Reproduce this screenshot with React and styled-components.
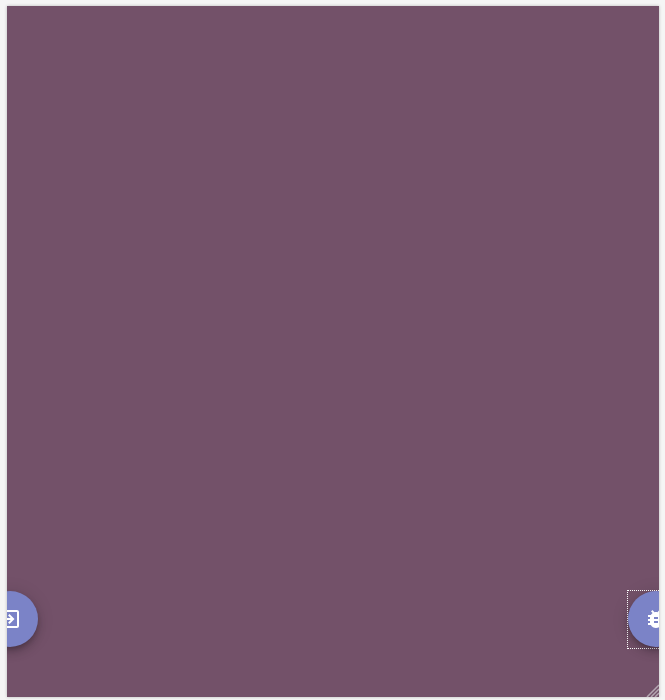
import React from 'react';
import styled, { createGlobalStyle } from 'styled-components';

const GlobalStyle = createGlobalStyle`
html, body {
    margin: 0;
    padding: 0;
    height: 100%;
    background: #f5f5f5;
    overflow: hidden;
}
`;

const Page = styled.div`
width: 665px;
height: 700px;
box-sizing: border-box;
padding: 6px 6px 3px 7px;
display: flex;
`;

const Canvas = styled.div`
position: relative;
flex: 1;
overflow: hidden;
background: #735169;
box-shadow: 0 0 3px rgba(0, 0, 0, 0.25);
`;

const Fab = styled.button`
position: absolute;
top: 585px;
left: ${props => props.left}px;
width: 56px;
height: 56px;
padding: 0;
border: none;
border-radius: 50%;
background: #7b83c7;
color: #fff;
display: flex;
align-items: center;
justify-content: center;
box-shadow: 0 3px 5px -1px rgba(0, 0, 0, 0.2), 0 6px 10px 0 rgba(0, 0, 0, 0.14), 0 1px 18px 0 rgba(0, 0, 0, 0.12);
`;

const FocusRing = styled.div`
position: absolute;
top: 584px;
left: 620px;
width: 56px;
height: 57px;
border: 1px dotted #fff;
`;

const ResizeHandle = styled.svg`
position: absolute;
right: 0;
bottom: 0;
width: 14px;
height: 14px;
`;

const ExitIcon = () => (
    <svg width="24" height="24" viewBox="0 0 24 24" fill="currentColor">
        <path d="M10.09 15.59L11.5 17l5-5-5-5-1.41 1.41L12.67 11H3v2h9.67l-2.58 2.59zM19 3H5c-1.11 0-2 .9-2 2v4h2V5h14v14H5v-4H3v4c0 1.1.89 2 2 2h14c1.1 0 2-.9 2-2V5c0-1.1-.9-2-2-2z" />
    </svg>
);

const BugIcon = () => (
    <svg width="24" height="24" viewBox="0 0 24 24" fill="currentColor">
        <path d="M20 8h-2.81c-.45-.78-1.07-1.45-1.82-1.96L17 4.41 15.59 3l-2.17 2.17C12.96 5.06 12.49 5 12 5c-.49 0-.96.06-1.41.17L8.41 3 7 4.41l1.62 1.63C7.88 6.55 7.26 7.22 6.81 8H4v2h2.09c-.05.33-.09.66-.09 1v1H4v2h2v1c0 .34.04.67.09 1H4v2h2.81c1.04 1.79 2.97 3 5.19 3s4.15-1.21 5.19-3H20v-2h-2.09c.05-.33.09-.66.09-1v-1h2v-2h-2v-1c0-.34-.04-.67-.09-1H20V8zm-6 8h-4v-2h4v2zm0-4h-4v-2h4v2z" />
    </svg>
);

export default function App() {
    return (
        <Page>
            <GlobalStyle />
            <Canvas>
                <Fab left={-25}><ExitIcon /></Fab>
                <FocusRing />
                <Fab left={621}><BugIcon /></Fab>
                <ResizeHandle viewBox="0 0 14 14">
                    <path d="M14 2L2 14M14 6L6 14M14 10L10 14" stroke="#b5a7b2" strokeWidth="1.5" fill="none" />
                </ResizeHandle>
            </Canvas>
        </Page>
    );
}
